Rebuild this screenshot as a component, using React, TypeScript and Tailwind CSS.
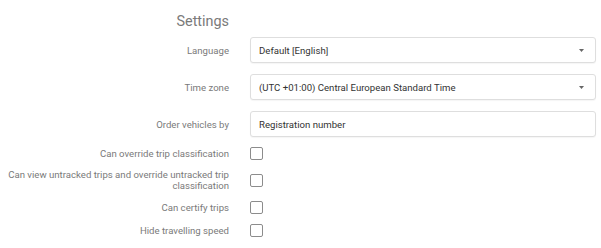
const Caret = () => (
  <svg width="5" height="3" viewBox="0 0 5 3" className="shrink-0">
    <path d="M0 0 L5 0 L2.5 3 Z" fill="#666" />
  </svg>
);

type SelectProps = { value: string; caret?: boolean };

const Field = ({ value, caret }: SelectProps) => (
  <div className="flex items-center justify-between h-[26px] w-[346px] border border-[#dedede] rounded-[3px] pl-[8px] pr-[11px] text-[#333] bg-white shadow-[0_1px_1px_rgba(0,0,0,0.04)]">
    <span>{value}</span>
    {caret && <Caret />}
  </div>
);

const Checkbox = () => (
  <div className="w-[13px] h-[13px] border-[1.5px] border-[#8c8c8c] rounded-[2px] bg-white" />
);

const App = () => {
  const checks = [
    { label: "Can override trip classification", h: "h-[14px]" },
    { label: "Can view untracked trips and override untracked trip classification", h: "h-[22px]" },
    { label: "Can certify trips", h: "h-[14px]" },
    { label: "Hide travelling speed", h: "h-[14px]" },
  ];
  return (
    <div className="w-[601px] h-[248px] bg-white font-['Roboto',sans-serif] text-[9.6px] leading-[11px] overflow-hidden">
      <div className="flex pt-[13px]">
        <div className="w-[229px] text-right text-[14.4px] leading-[17px] text-[#7a7a7a]">Settings</div>
      </div>

      <div className="flex items-center mt-[7px]">
        <div className="w-[229px] text-right text-[#7a7a7a]">Language</div>
        <div className="ml-[21px]">
          <Field value="Default [English]" caret />
        </div>
      </div>

      <div className="flex items-center mt-[11px]">
        <div className="w-[229px] text-right text-[#7a7a7a]">Time zone</div>
        <div className="ml-[21px]">
          <Field value="(UTC +01:00) Central European Standard Time" caret />
        </div>
      </div>

      <div className="flex items-center mt-[11px]">
        <div className="w-[229px] text-right text-[#7a7a7a]">Order vehicles by</div>
        <div className="ml-[21px]">
          <Field value="Registration number" />
        </div>
      </div>

      {checks.map((c, i) => (
        <div key={i} className={`flex items-center mt-[9px] ${c.h}`}>
          <div className="w-[229px] pl-[4px] text-right text-[#7a7a7a]">{c.label}</div>
          <div className="ml-[21px]">
            <Checkbox />
          </div>
        </div>
      ))}
    </div>
  );
};

export default App;
